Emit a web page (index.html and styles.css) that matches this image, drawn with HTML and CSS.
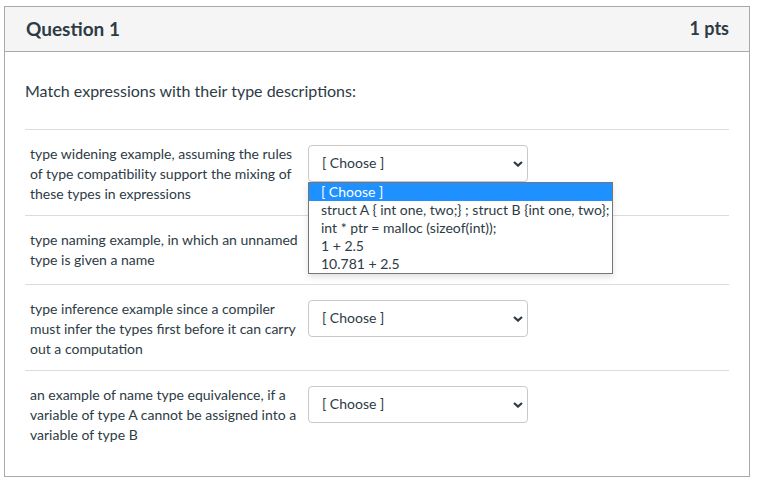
FILE: index.html
```html
<!DOCTYPE html>
<html lang="en">
<head>
<meta charset="utf-8">
<title>Question 1</title>
<link rel="stylesheet" href="styles.css">
</head>
<body>
<div class="card">
  <div class="card-header">
    <h2 class="title">Question 1</h2>
    <span class="points">1 pts</span>
  </div>
  <div class="card-body">
    <p class="prompt">Match expressions with their type descriptions:</p>
    <div class="answers">
      <div class="row">
        <div class="desc">type widening example, assuming the rules of type compatibility support the mixing of these types in expressions</div>
        <div class="select-wrap">
          <div class="select"><span>[ Choose ]</span><svg class="chev" width="10" height="6" viewBox="0 0 10 6"><path d="M1 1 L5 4.6 L9 1" fill="none" stroke="#2d3b45" stroke-width="2.2"/></svg></div>
          <ul class="dropdown">
            <li class="opt active">[ Choose ]</li>
            <li class="opt">struct A { int one, two;} ; struct B {int one, two};</li>
            <li class="opt">int * ptr = malloc (sizeof(int));</li>
            <li class="opt">1 + 2.5</li>
            <li class="opt">10.781 + 2.5</li>
          </ul>
        </div>
      </div>
      <div class="row">
        <div class="desc">type naming example, in which an unnamed type is given a name</div>
        <div class="select-wrap">
          <div class="select"><span>[ Choose ]</span><svg class="chev" width="10" height="6" viewBox="0 0 10 6"><path d="M1 1 L5 4.6 L9 1" fill="none" stroke="#2d3b45" stroke-width="2.2"/></svg></div>
        </div>
      </div>
      <div class="row">
        <div class="desc">type inference example since a compiler must infer the types first before it can carry out a computation</div>
        <div class="select-wrap">
          <div class="select"><span>[ Choose ]</span><svg class="chev" width="10" height="6" viewBox="0 0 10 6"><path d="M1 1 L5 4.6 L9 1" fill="none" stroke="#2d3b45" stroke-width="2.2"/></svg></div>
        </div>
      </div>
      <div class="row">
        <div class="desc">an example of name type equivalence, if a variable of type A cannot be assigned into a variable of type B</div>
        <div class="select-wrap">
          <div class="select"><span>[ Choose ]</span><svg class="chev" width="10" height="6" viewBox="0 0 10 6"><path d="M1 1 L5 4.6 L9 1" fill="none" stroke="#2d3b45" stroke-width="2.2"/></svg></div>
        </div>
      </div>
    </div>
  </div>
</div>
</body>
</html>
```

FILE: styles.css
```css
* { box-sizing: border-box; }
body {
  margin: 0;
  padding: 6px 8px 0 4px;
  font-family: Lato, "Open Sans", sans-serif;
  color: #2d3b45;
  background: #fff;
}
.card {
  width: 746px;
  border: 1px solid #a9a9a9;
}
.card-header {
  height: 45px;
  background: #f5f5f5;
  border-bottom: 1px solid #a9a9a9;
  display: flex;
  align-items: center;
  justify-content: space-between;
  padding: 0 20px 2px 21px;
}
.title {
  margin: 0;
  font-size: 19px;
  font-weight: 700;
}
.points {
  font-size: 18px;
  font-weight: 700;
}
.card-body {
  padding: 27px 20px 20px;
}
.prompt {
  margin: 0 0 26px;
  font-size: 16px;
  line-height: 24px;
}
.row {
  display: flex;
  align-items: flex-start;
  border-top: 1px solid #dcdcdc;
  padding: 15px 0 10px 5px;
}
.desc {
  flex: 0 0 270px;
  margin: -1px 8px 1px 0;
  font-size: 14px;
  line-height: 20px;
}
.select-wrap {
  position: relative;
}
.select {
  width: 220px;
  height: 37px;
  margin-bottom: 6px;
  border: 1px solid #c9c9c9;
  border-radius: 4px;
  display: flex;
  align-items: center;
  justify-content: space-between;
  padding: 0 4px 2px 13px;
  font-size: 14px;
  background: #fff;
}
.chev { display: block; margin-top: 2px; }
.dropdown {
  position: absolute;
  top: 37px;
  left: 0;
  width: 305px;
  margin: 0;
  padding: 0;
  list-style: none;
  background: #fff;
  border: 1px solid #767676;
  box-shadow: 0 3px 6px rgba(0,0,0,0.12);
  z-index: 2;
}
.opt {
  font-size: 14px;
  line-height: 18px;
  padding-left: 12px;
  white-space: nowrap;
  color: #2d3b45;
}
.opt.active {
  background: #1e90ff;
  color: #fff;
}
```
